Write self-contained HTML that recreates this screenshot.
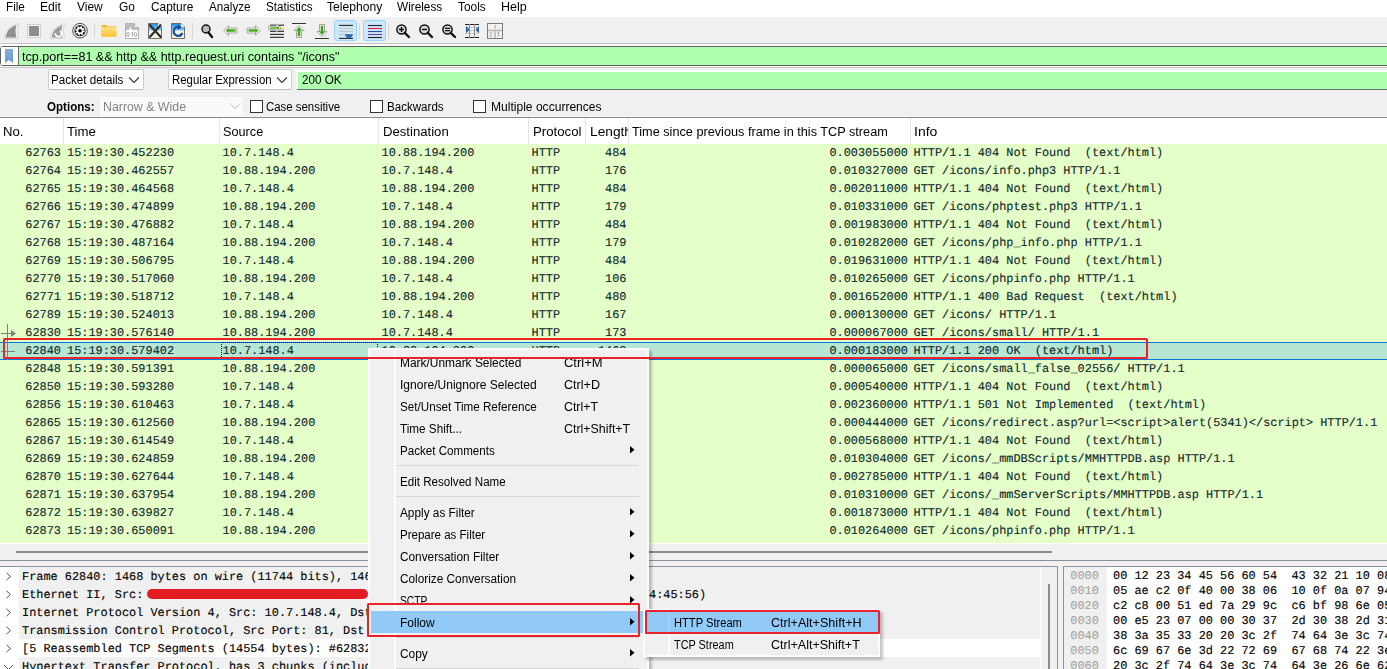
<!DOCTYPE html>
<html><head><meta charset="utf-8"><style>
html,body{margin:0;padding:0;}
body{width:1387px;height:669px;overflow:hidden;position:relative;background:#f0f0f0;}
</style></head><body>
<div style="position:absolute;left:0px;top:0px;width:1387px;height:17px;background:#ffffff;"></div>
<div style="position:absolute;left:0px;top:17px;width:1387px;height:1px;background:#f2f2f2;"></div>
<div style="position:absolute;left:0px;top:18px;width:1387px;height:25px;background:#f0f0f0;"></div>
<div style="position:absolute;left:0px;top:43px;width:1387px;height:1px;background:#c4c4c4;"></div>
<div style="position:absolute;left:0px;top:44px;width:1387px;height:2px;background:#fdfdfd;"></div>
<div style="position:absolute;left:5.6px;top:0.74px;font:400 12px/12px 'Liberation Sans', sans-serif;color:#000;white-space:pre;transform:scaleX(0.9771);transform-origin:0 0;">File</div>
<div style="position:absolute;left:40.199999999999996px;top:0.74px;font:400 12px/12px 'Liberation Sans', sans-serif;color:#000;white-space:pre;transform:scaleX(1.0103);transform-origin:0 0;">Edit</div>
<div style="position:absolute;left:77.0px;top:0.74px;font:400 12px/12px 'Liberation Sans', sans-serif;color:#000;white-space:pre;transform:scaleX(0.9962);transform-origin:0 0;">View</div>
<div style="position:absolute;left:118.7px;top:0.74px;font:400 12px/12px 'Liberation Sans', sans-serif;color:#000;white-space:pre;transform:scaleX(0.9990);transform-origin:0 0;">Go</div>
<div style="position:absolute;left:150.70000000000002px;top:0.74px;font:400 12px/12px 'Liberation Sans', sans-serif;color:#000;white-space:pre;transform:scaleX(0.9906);transform-origin:0 0;">Capture</div>
<div style="position:absolute;left:208.70000000000002px;top:0.74px;font:400 12px/12px 'Liberation Sans', sans-serif;color:#000;white-space:pre;transform:scaleX(0.9742);transform-origin:0 0;">Analyze</div>
<div style="position:absolute;left:265.5px;top:0.74px;font:400 12px/12px 'Liberation Sans', sans-serif;color:#000;white-space:pre;transform:scaleX(0.9705);transform-origin:0 0;">Statistics</div>
<div style="position:absolute;left:327.3px;top:0.74px;font:400 12px/12px 'Liberation Sans', sans-serif;color:#000;white-space:pre;transform:scaleX(1.0088);transform-origin:0 0;">Telephony</div>
<div style="position:absolute;left:397.3px;top:0.74px;font:400 12px/12px 'Liberation Sans', sans-serif;color:#000;white-space:pre;transform:scaleX(0.9823);transform-origin:0 0;">Wireless</div>
<div style="position:absolute;left:458.1px;top:0.74px;font:400 12px/12px 'Liberation Sans', sans-serif;color:#000;white-space:pre;transform:scaleX(0.9887);transform-origin:0 0;">Tools</div>
<div style="position:absolute;left:501.3px;top:0.74px;font:400 12px/12px 'Liberation Sans', sans-serif;color:#000;white-space:pre;transform:scaleX(1.0451);transform-origin:0 0;">Help</div>
<svg style="position:absolute;left:3px;top:23px" width="17" height="16" viewBox="0 0 17 16"><path d="M1 15.5 Q2 4 15.5 0.5 Q13 8 15.5 15.5 Z" fill="#fafafa" stroke="#d4d4d4" stroke-width="1"/><path d="M2.5 14.5 Q4 5 13.5 2 Q11.5 8 13.5 14.5 Z" fill="#8f8f8f"/></svg>
<svg style="position:absolute;left:27px;top:24px" width="14" height="14" viewBox="0 0 14 14"><rect x="0.5" y="0.5" width="13" height="13" fill="#f8f8f8" stroke="#d2d2d2"/><rect x="2" y="2" width="10" height="10" fill="#8e8e8e"/></svg>
<svg style="position:absolute;left:49px;top:23px" width="17" height="16" viewBox="0 0 17 16"><path d="M1 15.5 Q2 4 15.5 0.5 Q13 8 15.5 15.5 Z" fill="#fafafa" stroke="#d4d4d4" stroke-width="1"/><path d="M2.5 14.5 Q4 5 13.5 2 Q11.5 8 13.5 14.5 Z" fill="#9a9a9a"/><path d="M6.5 10 A3 3 0 1 0 11 8" stroke="#fff" stroke-width="1.6" fill="none"/></svg>
<svg style="position:absolute;left:72px;top:23px" width="16" height="16" viewBox="0 0 16 16"><circle cx="8" cy="7.7" r="7.3" fill="#fff" stroke="#4a4a4a" stroke-width="1"/><circle cx="8" cy="7.7" r="5.6" fill="#1c1c1c"/><circle cx="8" cy="7.7" r="3.4" fill="#fff"/><circle cx="8" cy="7.7" r="3.9" fill="none" stroke="#fff" stroke-width="1.7" stroke-dasharray="1.5 1.56"/><circle cx="8" cy="7.7" r="1.8" fill="#000"/></svg>
<div style="position:absolute;left:94px;top:23px;width:1px;height:16px;background:#d6d6d6"></div>
<svg style="position:absolute;left:101px;top:24px" width="16" height="13" viewBox="0 0 16 13"><defs><linearGradient id="fg" x1="0" y1="0" x2="0" y2="1"><stop offset="0" stop-color="#ffe18a"/><stop offset="1" stop-color="#fbc530"/></linearGradient></defs><path d="M0.5 1 H5 L6 2.2 H15 V12.5 H0.5 Z" fill="#f6b81e"/><rect x="0.5" y="3" width="15" height="9.5" fill="url(#fg)"/></svg>
<svg style="position:absolute;left:125px;top:23px" width="15" height="16" viewBox="0 0 15 16"><path d="M0.5 0.5 H9.5 L13.5 4.5 V15.5 H0.5 Z" fill="#fff" stroke="#b0b0b0"/><path d="M1 1 H9.5 V4.5 H13 V7 H1 Z" fill="#bdbdbd"/><path d="M4 7 Q5 4 5.5 3.5 Q6 5 7 7 Z" fill="#fff"/><path d="M9.5 0.5 V4.5 H13.5" fill="#fff" stroke="#b0b0b0"/><g fill="none" stroke="#a6a6a6" stroke-width="1"><ellipse cx="3" cy="11.5" rx="1.3" ry="2"/><path d="M6.5 9.5 L7.3 9.2 V13.5"/><ellipse cx="10.5" cy="11.5" rx="1.3" ry="2"/></g></svg>
<svg style="position:absolute;left:148px;top:23px" width="15" height="16" viewBox="0 0 15 16"><defs><linearGradient id="sky" x1="0" y1="0" x2="0" y2="1"><stop offset="0" stop-color="#1f8fe0"/><stop offset="0.42" stop-color="#7cc4f0"/><stop offset="0.5" stop-color="#f4f3e6"/><stop offset="1" stop-color="#f5f1d8"/></linearGradient></defs><path d="M0.5 0.5 H10 L13.5 4 V15.5 H0.5 Z" fill="url(#sky)" stroke="#6e6e6e"/><path d="M10 0.5 V4 H13.5 Z" fill="#fff"/><path d="M2 2.2 L12.5 13.8 M12.5 2.2 L2 13.8" stroke="#2a2a2a" stroke-width="2.1" stroke-linecap="round"/></svg>
<svg style="position:absolute;left:171px;top:23px" width="15" height="16" viewBox="0 0 15 16"><path d="M0.5 0.5 H10 L13.5 4 V15.5 H0.5 Z" fill="url(#sky)" stroke="#6e6e6e"/><path d="M10 0.5 V4 H13.5 Z" fill="#fff"/><path d="M11.3 10 A4.4 4.4 0 1 1 7.5 4" stroke="#1b4b9c" stroke-width="2.2" fill="none"/><path d="M6.5 1.3 L10.8 4.2 L6.8 7 Z" fill="#1b4b9c"/></svg>
<div style="position:absolute;left:192px;top:23px;width:1px;height:16px;background:#d6d6d6"></div>
<svg style="position:absolute;left:201px;top:24px" width="13" height="15" viewBox="0 0 13 15"><circle cx="5" cy="5" r="4" fill="#bdbdbd" stroke="#111" stroke-width="1.4"/><path d="M7.5 8.5 L11 13" stroke="#111" stroke-width="2.4" stroke-linecap="round"/></svg>
<svg style="position:absolute;left:223px;top:25px" width="15" height="11" viewBox="0 0 15 11"><path d="M0.7 5.5 L5.5 0.7 V3 H13.8 V8 H5.5 V10.3 Z" fill="#fff" stroke="#9a9a9a" stroke-width="0.9"/><path d="M2.5 5.5 L5.5 3 V4.3 H12.5 V6.7 H5.5 V8 Z" fill="#4aa81a"/></svg>
<svg style="position:absolute;left:246px;top:25px" width="15" height="11" viewBox="0 0 15 11"><path d="M14.3 5.5 L9.5 0.7 V3 H1.2 V8 H9.5 V10.3 Z" fill="#fff" stroke="#9a9a9a" stroke-width="0.9"/><path d="M12.5 5.5 L9.5 3 V4.3 H2.5 V6.7 H9.5 V8 Z" fill="#4aa81a"/></svg>
<svg style="position:absolute;left:268px;top:23px" width="17" height="16" viewBox="0 0 17 16"><g stroke="#222" stroke-width="1.1"><path d="M2 2.2 H16"/><path d="M2 8.3 H16"/><path d="M2 11.4 H16"/><path d="M2 14.3 H16"/></g><path d="M2 5.7 H16" stroke="#222" stroke-width="1.1"/><rect x="13" y="4.6" width="3" height="2.2" fill="#f5e23c"/><path d="M0.6 3.2 H8.2 V0.8 L13.2 5 L8.2 9.2 V6.8 H0.6 Z" fill="#fff" stroke="#a0a0a0" stroke-width="0.9"/><path d="M2 4.2 H9.2 V2.8 L11.6 5 L9.2 7.2 V5.8 H2 Z" fill="#4aa81a"/></svg>
<svg style="position:absolute;left:292px;top:23px" width="15" height="16" viewBox="0 0 15 16"><path d="M0 0.5 H14" stroke="#333" stroke-width="1"/><path d="M7 2.5 L12 7.5 H9.5 V14.5 H4.5 V7.5 H2 Z" fill="#fff" stroke="#9a9a9a" stroke-width="0.9"/><path d="M7 4 L10 7.5 H8.3 V13.3 H5.7 V7.5 H4 Z" fill="#3f9f18"/></svg>
<svg style="position:absolute;left:315px;top:23px" width="15" height="16" viewBox="0 0 15 16"><path d="M0 15.5 H14" stroke="#333" stroke-width="1"/><path d="M7 13.5 L12 8.5 H9.5 V1.5 H4.5 V8.5 H2 Z" fill="#fff" stroke="#9a9a9a" stroke-width="0.9"/><path d="M7 12 L10 8.5 H8.3 V2.7 H5.7 V8.5 H4 Z" fill="#3f9f18"/></svg>
<div style="position:absolute;left:334px;top:20px;width:21px;height:19px;background:#cce8ff;border:1px solid #99d1ff;border-radius:3px"></div>
<svg style="position:absolute;left:339px;top:24px" width="15" height="16" viewBox="0 0 15 16"><g stroke-width="1.1"><path d="M0 1.4 H14" stroke="#222"/><path d="M0 4.3 H14" stroke="#c4c4b8"/><path d="M0 7.3 H14" stroke="#c4c4b8"/><path d="M0 10.5 H14" stroke="#c4c4b8"/><path d="M0 14.4 H14" stroke="#222"/></g><path d="M6 10.3 H14 Q13.5 13.5 10 14.6 Q6.5 13.5 6 10.3 Z" fill="#2f64b0"/></svg>
<div style="position:absolute;left:359px;top:23px;width:1px;height:16px;background:#d6d6d6"></div>
<div style="position:absolute;left:363px;top:20px;width:21px;height:19px;background:#cce8ff;border:1px solid #99d1ff;border-radius:3px"></div>
<svg style="position:absolute;left:368px;top:24px" width="15" height="16" viewBox="0 0 15 16"><g stroke-width="1.1"><path d="M0 1.5 H14" stroke="#222"/><path d="M0 4.5 H14" stroke="#e0202a"/><path d="M0 7.5 H14" stroke="#2a4fa8"/><path d="M0 10.5 H14" stroke="#7a3f8c"/><path d="M0 13.5 H14" stroke="#222"/></g></svg>
<div style="position:absolute;left:388px;top:23px;width:1px;height:16px;background:#d6d6d6"></div>
<svg style="position:absolute;left:396px;top:24px" width="15" height="15" viewBox="0 0 15 15"><circle cx="5.5" cy="5.5" r="4.6" fill="#d6d6d6" stroke="#111" stroke-width="1.5"/><path d="M8.8 8.8 L13 13" stroke="#111" stroke-width="2.4" stroke-linecap="round"/><path d="M3 5.5 H8 M5.5 3 V8" stroke="#111" stroke-width="1.4"/></svg>
<svg style="position:absolute;left:419px;top:24px" width="15" height="15" viewBox="0 0 15 15"><circle cx="5.5" cy="5.5" r="4.6" fill="#d6d6d6" stroke="#111" stroke-width="1.5"/><path d="M8.8 8.8 L13 13" stroke="#111" stroke-width="2.4" stroke-linecap="round"/><path d="M3 5.5 H8" stroke="#111" stroke-width="1.4"/></svg>
<svg style="position:absolute;left:442px;top:24px" width="15" height="15" viewBox="0 0 15 15"><circle cx="5.5" cy="5.5" r="4.6" fill="#d6d6d6" stroke="#111" stroke-width="1.5"/><path d="M8.8 8.8 L13 13" stroke="#111" stroke-width="2.4" stroke-linecap="round"/><path d="M3 4.4 H8 M3 6.6 H8" stroke="#111" stroke-width="1.1"/></svg>
<svg style="position:absolute;left:465px;top:24px" width="15" height="15" viewBox="0 0 15 15"><g stroke="#c8c8bc" stroke-width="1"><path d="M0 3.5 H14 M0 6.5 H14 M0 9.5 H14"/></g><g stroke="#222" stroke-width="1.1"><path d="M0 0.5 H14 M0 13.5 H14"/></g><g stroke="#8a8a8a" stroke-width="1"><path d="M4.5 0 V14 M9.5 0 V14"/></g><path d="M1 2 Q3 3 4.3 5.5 Q3 8 1 9 Z M14 2 Q12 3 10.7 5.5 Q12 8 14 9 Z" fill="#2f64b0"/></svg>
<svg style="position:absolute;left:487px;top:23px" width="16" height="16" viewBox="0 0 16 16"><rect x="0.5" y="0.5" width="15" height="15" fill="#f2f2f2" stroke="#7a7a7a"/><path d="M1 7.5 H15 M8 7.5 V15" stroke="#b8b8b8" stroke-width="1.5"/><g fill="none" stroke="#9a9a9a" stroke-width="0.8"><path d="M7.3 3 L8.2 2.3 V6"/><path d="M2.6 10 Q3.8 9 4.6 10 Q4.6 11 2.6 13.2 H4.8"/><path d="M10.4 9.6 H12.2 L11 11 Q12.6 11.2 12 12.8 Q11 13.5 10.3 12.8"/></g></svg>
<div style="position:absolute;left:0px;top:46px;width:1400px;height:18px;border:1px solid #5f5f5f;border-radius:3px;background:#afffaf"></div>
<div style="position:absolute;left:1px;top:47px;width:17px;height:18px;background:#ffffff;"></div>
<div style="position:absolute;left:18px;top:47px;width:1px;height:18px;background:#6a6a6a;"></div>
<svg style="position:absolute;left:5px;top:49px" width="8" height="14"><defs><linearGradient id="bmg" x1="0" y1="0" x2="0" y2="1"><stop offset="0" stop-color="#86aedb"/><stop offset="1" stop-color="#6a9ad3"/></linearGradient></defs><path d="M0 0 H8 V14 L4 11 L0 14 Z" fill="url(#bmg)"/></svg>
<div style="position:absolute;left:21.5px;top:51.14px;font:400 12px/12px 'Liberation Sans', sans-serif;color:#000;white-space:pre;transform:scaleX(1.0443);transform-origin:0 0;">tcp.port==81 &amp;&amp; http &amp;&amp; http.request.uri contains "/icons"</div>
<div style="position:absolute;left:0px;top:66px;width:1387px;height:1px;background:#f6f6f6;"></div>
<div style="position:absolute;left:0px;top:67px;width:1387px;height:1px;background:#c6c6c6;"></div>
<div style="position:absolute;left:0px;top:68px;width:1387px;height:49px;background:#f0f0f0;"></div>
<div style="position:absolute;left:0px;top:116px;width:1387px;height:1px;background:#f8f8f8;"></div>
<div style="position:absolute;left:0px;top:117px;width:1387px;height:1px;background:#838994;"></div>
<div style="position:absolute;left:48px;top:69px;width:94px;height:19px;border:1px solid #cdcdcd;border-bottom-color:#bdbdbd;background:#fff;border-radius:2px"></div>
<div style="position:absolute;left:50.5px;top:73.74px;font:400 12px/12px 'Liberation Sans', sans-serif;color:#000;white-space:pre;transform:scaleX(0.9690);transform-origin:0 0;">Packet details</div>
<svg style="position:absolute;left:128px;top:76px" width="12" height="8"><path d="M1 1.5 L6 6.5 L11 1.5" stroke="#333" stroke-width="1.1" fill="none"/></svg>
<div style="position:absolute;left:168px;top:69px;width:122px;height:19px;border:1px solid #cdcdcd;border-bottom-color:#bdbdbd;background:#fff;border-radius:2px"></div>
<div style="position:absolute;left:171.7px;top:73.74px;font:400 12px/12px 'Liberation Sans', sans-serif;color:#000;white-space:pre;transform:scaleX(0.9511);transform-origin:0 0;">Regular Expression</div>
<svg style="position:absolute;left:276px;top:76px" width="12" height="8"><path d="M1 1.5 L6 6.5 L11 1.5" stroke="#333" stroke-width="1.1" fill="none"/></svg>
<div style="position:absolute;left:296px;top:70px;width:1100px;height:19px;background:#ffffff;"></div>
<div style="position:absolute;left:298px;top:72px;width:1100px;height:17px;background:#afffaf;"></div>
<div style="position:absolute;left:297px;top:89px;width:1100px;height:1px;background:#6e6e6e;"></div>
<div style="position:absolute;left:301.5px;top:74.44px;font:400 12px/12px 'Liberation Sans', sans-serif;color:#000;white-space:pre;transform:scaleX(0.9704);transform-origin:0 0;">200 OK</div>
<div style="position:absolute;left:47px;top:101.04px;font:700 12px/12px 'Liberation Sans', sans-serif;color:#000;white-space:pre;transform:scaleX(0.9650);transform-origin:0 0;">Options:</div>
<div style="position:absolute;left:100px;top:97px;width:143px;height:19px;background:#fafafa;"></div>
<div style="position:absolute;left:102.5px;top:101.04px;font:400 12px/12px 'Liberation Sans', sans-serif;color:#838383;white-space:pre;transform:scaleX(1.0287);transform-origin:0 0;">Narrow &amp; Wide</div>
<svg style="position:absolute;left:229px;top:102px" width="12" height="8"><path d="M1 1.5 L6 6.5 L11 1.5" stroke="#bcbcbc" stroke-width="1" fill="none"/></svg>
<div style="position:absolute;left:249.5px;top:99.7px;width:11px;height:11px;border:1px solid #333;background:#fff"></div>
<div style="position:absolute;left:266.4px;top:101.04px;font:400 12px/12px 'Liberation Sans', sans-serif;color:#000;white-space:pre;transform:scaleX(0.9507);transform-origin:0 0;">Case sensitive</div>
<div style="position:absolute;left:370px;top:99.7px;width:11px;height:11px;border:1px solid #333;background:#fff"></div>
<div style="position:absolute;left:387.4px;top:101.04px;font:400 12px/12px 'Liberation Sans', sans-serif;color:#000;white-space:pre;transform:scaleX(0.9644);transform-origin:0 0;">Backwards</div>
<div style="position:absolute;left:472.7px;top:99.7px;width:11px;height:11px;border:1px solid #333;background:#fff"></div>
<div style="position:absolute;left:490.79999999999995px;top:101.04px;font:400 12px/12px 'Liberation Sans', sans-serif;color:#000;white-space:pre;transform:scaleX(1.0050);transform-origin:0 0;">Multiple occurrences</div>
<div style="position:absolute;left:0px;top:118px;width:1387px;height:26px;background:#ffffff;"></div>
<div style="position:absolute;left:63px;top:118px;width:1px;height:26px;background:#e5e5e5;"></div>
<div style="position:absolute;left:219px;top:118px;width:1px;height:26px;background:#e5e5e5;"></div>
<div style="position:absolute;left:378px;top:118px;width:1px;height:26px;background:#e5e5e5;"></div>
<div style="position:absolute;left:528px;top:118px;width:1px;height:26px;background:#e5e5e5;"></div>
<div style="position:absolute;left:585px;top:118px;width:1px;height:26px;background:#e5e5e5;"></div>
<div style="position:absolute;left:628px;top:118px;width:1px;height:26px;background:#e5e5e5;"></div>
<div style="position:absolute;left:910px;top:118px;width:1px;height:26px;background:#e5e5e5;"></div>
<div style="position:absolute;left:3.1px;top:126.04px;font:400 12px/12px 'Liberation Sans', sans-serif;color:#000;white-space:pre;transform:scaleX(1.0970);transform-origin:0 0;">No.</div>
<div style="position:absolute;left:67.4px;top:126.04px;font:400 12px/12px 'Liberation Sans', sans-serif;color:#000;white-space:pre;transform:scaleX(1.1016);transform-origin:0 0;">Time</div>
<div style="position:absolute;left:223.4px;top:126.04px;font:400 12px/12px 'Liberation Sans', sans-serif;color:#000;white-space:pre;transform:scaleX(1.0570);transform-origin:0 0;">Source</div>
<div style="position:absolute;left:382.7px;top:126.04px;font:400 12px/12px 'Liberation Sans', sans-serif;color:#000;white-space:pre;transform:scaleX(1.0941);transform-origin:0 0;">Destination</div>
<div style="position:absolute;left:532.6999999999999px;top:126.04px;font:400 12px/12px 'Liberation Sans', sans-serif;color:#000;white-space:pre;transform:scaleX(1.1015);transform-origin:0 0;">Protocol</div>
<div style="position:absolute;left:632.4px;top:126.04px;font:400 12px/12px 'Liberation Sans', sans-serif;color:#000;white-space:pre;transform:scaleX(1.0576);transform-origin:0 0;">Time since previous frame in this TCP stream</div>
<div style="position:absolute;left:914.1px;top:126.04px;font:400 12px/12px 'Liberation Sans', sans-serif;color:#000;white-space:pre;transform:scaleX(1.1691);transform-origin:0 0;">Info</div>
<div style="position:absolute;left:586px;top:118px;width:42px;height:26px;overflow:hidden"><div style="position:absolute;left:3.8px;top:8.04px;font:400 12px/12px 'Liberation Sans', sans-serif;color:#000;white-space:pre;transform:scaleX(1.1443);transform-origin:0 0;">Length</div></div>
<div style="position:absolute;left:0px;top:144px;width:1387px;height:399px;background:#e4ffc7;"></div>
<div style="position:absolute;left:25.294189453125px;top:147.58px;font:400 11.9px/11.9px 'Liberation Mono', monospace;color:#12272e;white-space:pre;-webkit-text-stroke:0.12px #12272e;text-rendering:geometricPrecision;">62763</div>
<div style="position:absolute;left:67.0px;top:147.58px;font:400 11.9px/11.9px 'Liberation Mono', monospace;color:#12272e;white-space:pre;-webkit-text-stroke:0.12px #12272e;text-rendering:geometricPrecision;">15:19:30.452230</div>
<div style="position:absolute;left:222.5px;top:147.58px;font:400 11.9px/11.9px 'Liberation Mono', monospace;color:#12272e;white-space:pre;-webkit-text-stroke:0.12px #12272e;text-rendering:geometricPrecision;">10.7.148.4</div>
<div style="position:absolute;left:381.5px;top:147.58px;font:400 11.9px/11.9px 'Liberation Mono', monospace;color:#12272e;white-space:pre;-webkit-text-stroke:0.12px #12272e;text-rendering:geometricPrecision;">10.88.194.200</div>
<div style="position:absolute;left:531.5px;top:147.58px;font:400 11.9px/11.9px 'Liberation Mono', monospace;color:#12272e;white-space:pre;-webkit-text-stroke:0.12px #12272e;text-rendering:geometricPrecision;">HTTP</div>
<div style="position:absolute;left:605.076513671875px;top:147.58px;font:400 11.9px/11.9px 'Liberation Mono', monospace;color:#12272e;white-space:pre;-webkit-text-stroke:0.12px #12272e;text-rendering:geometricPrecision;">484</div>
<div style="position:absolute;left:829.447216796875px;top:147.58px;font:400 11.9px/11.9px 'Liberation Mono', monospace;color:#12272e;white-space:pre;-webkit-text-stroke:0.12px #12272e;text-rendering:geometricPrecision;">0.003055000</div>
<div style="position:absolute;left:913.5px;top:147.58px;font:400 11.9px/11.9px 'Liberation Mono', monospace;color:#12272e;white-space:pre;-webkit-text-stroke:0.12px #12272e;text-rendering:geometricPrecision;">HTTP/1.1 404 Not Found  (text/html)</div>
<div style="position:absolute;left:25.294189453125px;top:165.58px;font:400 11.9px/11.9px 'Liberation Mono', monospace;color:#12272e;white-space:pre;-webkit-text-stroke:0.12px #12272e;text-rendering:geometricPrecision;">62764</div>
<div style="position:absolute;left:67.0px;top:165.58px;font:400 11.9px/11.9px 'Liberation Mono', monospace;color:#12272e;white-space:pre;-webkit-text-stroke:0.12px #12272e;text-rendering:geometricPrecision;">15:19:30.462557</div>
<div style="position:absolute;left:222.5px;top:165.58px;font:400 11.9px/11.9px 'Liberation Mono', monospace;color:#12272e;white-space:pre;-webkit-text-stroke:0.12px #12272e;text-rendering:geometricPrecision;">10.88.194.200</div>
<div style="position:absolute;left:381.5px;top:165.58px;font:400 11.9px/11.9px 'Liberation Mono', monospace;color:#12272e;white-space:pre;-webkit-text-stroke:0.12px #12272e;text-rendering:geometricPrecision;">10.7.148.4</div>
<div style="position:absolute;left:531.5px;top:165.58px;font:400 11.9px/11.9px 'Liberation Mono', monospace;color:#12272e;white-space:pre;-webkit-text-stroke:0.12px #12272e;text-rendering:geometricPrecision;">HTTP</div>
<div style="position:absolute;left:605.076513671875px;top:165.58px;font:400 11.9px/11.9px 'Liberation Mono', monospace;color:#12272e;white-space:pre;-webkit-text-stroke:0.12px #12272e;text-rendering:geometricPrecision;">176</div>
<div style="position:absolute;left:829.447216796875px;top:165.58px;font:400 11.9px/11.9px 'Liberation Mono', monospace;color:#12272e;white-space:pre;-webkit-text-stroke:0.12px #12272e;text-rendering:geometricPrecision;">0.010327000</div>
<div style="position:absolute;left:913.5px;top:165.58px;font:400 11.9px/11.9px 'Liberation Mono', monospace;color:#12272e;white-space:pre;-webkit-text-stroke:0.12px #12272e;text-rendering:geometricPrecision;">GET /icons/info.php3 HTTP/1.1</div>
<div style="position:absolute;left:25.294189453125px;top:183.58px;font:400 11.9px/11.9px 'Liberation Mono', monospace;color:#12272e;white-space:pre;-webkit-text-stroke:0.12px #12272e;text-rendering:geometricPrecision;">62765</div>
<div style="position:absolute;left:67.0px;top:183.58px;font:400 11.9px/11.9px 'Liberation Mono', monospace;color:#12272e;white-space:pre;-webkit-text-stroke:0.12px #12272e;text-rendering:geometricPrecision;">15:19:30.464568</div>
<div style="position:absolute;left:222.5px;top:183.58px;font:400 11.9px/11.9px 'Liberation Mono', monospace;color:#12272e;white-space:pre;-webkit-text-stroke:0.12px #12272e;text-rendering:geometricPrecision;">10.7.148.4</div>
<div style="position:absolute;left:381.5px;top:183.58px;font:400 11.9px/11.9px 'Liberation Mono', monospace;color:#12272e;white-space:pre;-webkit-text-stroke:0.12px #12272e;text-rendering:geometricPrecision;">10.88.194.200</div>
<div style="position:absolute;left:531.5px;top:183.58px;font:400 11.9px/11.9px 'Liberation Mono', monospace;color:#12272e;white-space:pre;-webkit-text-stroke:0.12px #12272e;text-rendering:geometricPrecision;">HTTP</div>
<div style="position:absolute;left:605.076513671875px;top:183.58px;font:400 11.9px/11.9px 'Liberation Mono', monospace;color:#12272e;white-space:pre;-webkit-text-stroke:0.12px #12272e;text-rendering:geometricPrecision;">484</div>
<div style="position:absolute;left:829.447216796875px;top:183.58px;font:400 11.9px/11.9px 'Liberation Mono', monospace;color:#12272e;white-space:pre;-webkit-text-stroke:0.12px #12272e;text-rendering:geometricPrecision;">0.002011000</div>
<div style="position:absolute;left:913.5px;top:183.58px;font:400 11.9px/11.9px 'Liberation Mono', monospace;color:#12272e;white-space:pre;-webkit-text-stroke:0.12px #12272e;text-rendering:geometricPrecision;">HTTP/1.1 404 Not Found  (text/html)</div>
<div style="position:absolute;left:25.294189453125px;top:201.58px;font:400 11.9px/11.9px 'Liberation Mono', monospace;color:#12272e;white-space:pre;-webkit-text-stroke:0.12px #12272e;text-rendering:geometricPrecision;">62766</div>
<div style="position:absolute;left:67.0px;top:201.58px;font:400 11.9px/11.9px 'Liberation Mono', monospace;color:#12272e;white-space:pre;-webkit-text-stroke:0.12px #12272e;text-rendering:geometricPrecision;">15:19:30.474899</div>
<div style="position:absolute;left:222.5px;top:201.58px;font:400 11.9px/11.9px 'Liberation Mono', monospace;color:#12272e;white-space:pre;-webkit-text-stroke:0.12px #12272e;text-rendering:geometricPrecision;">10.88.194.200</div>
<div style="position:absolute;left:381.5px;top:201.58px;font:400 11.9px/11.9px 'Liberation Mono', monospace;color:#12272e;white-space:pre;-webkit-text-stroke:0.12px #12272e;text-rendering:geometricPrecision;">10.7.148.4</div>
<div style="position:absolute;left:531.5px;top:201.58px;font:400 11.9px/11.9px 'Liberation Mono', monospace;color:#12272e;white-space:pre;-webkit-text-stroke:0.12px #12272e;text-rendering:geometricPrecision;">HTTP</div>
<div style="position:absolute;left:605.076513671875px;top:201.58px;font:400 11.9px/11.9px 'Liberation Mono', monospace;color:#12272e;white-space:pre;-webkit-text-stroke:0.12px #12272e;text-rendering:geometricPrecision;">179</div>
<div style="position:absolute;left:829.447216796875px;top:201.58px;font:400 11.9px/11.9px 'Liberation Mono', monospace;color:#12272e;white-space:pre;-webkit-text-stroke:0.12px #12272e;text-rendering:geometricPrecision;">0.010331000</div>
<div style="position:absolute;left:913.5px;top:201.58px;font:400 11.9px/11.9px 'Liberation Mono', monospace;color:#12272e;white-space:pre;-webkit-text-stroke:0.12px #12272e;text-rendering:geometricPrecision;">GET /icons/phptest.php3 HTTP/1.1</div>
<div style="position:absolute;left:25.294189453125px;top:219.58px;font:400 11.9px/11.9px 'Liberation Mono', monospace;color:#12272e;white-space:pre;-webkit-text-stroke:0.12px #12272e;text-rendering:geometricPrecision;">62767</div>
<div style="position:absolute;left:67.0px;top:219.58px;font:400 11.9px/11.9px 'Liberation Mono', monospace;color:#12272e;white-space:pre;-webkit-text-stroke:0.12px #12272e;text-rendering:geometricPrecision;">15:19:30.476882</div>
<div style="position:absolute;left:222.5px;top:219.58px;font:400 11.9px/11.9px 'Liberation Mono', monospace;color:#12272e;white-space:pre;-webkit-text-stroke:0.12px #12272e;text-rendering:geometricPrecision;">10.7.148.4</div>
<div style="position:absolute;left:381.5px;top:219.58px;font:400 11.9px/11.9px 'Liberation Mono', monospace;color:#12272e;white-space:pre;-webkit-text-stroke:0.12px #12272e;text-rendering:geometricPrecision;">10.88.194.200</div>
<div style="position:absolute;left:531.5px;top:219.58px;font:400 11.9px/11.9px 'Liberation Mono', monospace;color:#12272e;white-space:pre;-webkit-text-stroke:0.12px #12272e;text-rendering:geometricPrecision;">HTTP</div>
<div style="position:absolute;left:605.076513671875px;top:219.58px;font:400 11.9px/11.9px 'Liberation Mono', monospace;color:#12272e;white-space:pre;-webkit-text-stroke:0.12px #12272e;text-rendering:geometricPrecision;">484</div>
<div style="position:absolute;left:829.447216796875px;top:219.58px;font:400 11.9px/11.9px 'Liberation Mono', monospace;color:#12272e;white-space:pre;-webkit-text-stroke:0.12px #12272e;text-rendering:geometricPrecision;">0.001983000</div>
<div style="position:absolute;left:913.5px;top:219.58px;font:400 11.9px/11.9px 'Liberation Mono', monospace;color:#12272e;white-space:pre;-webkit-text-stroke:0.12px #12272e;text-rendering:geometricPrecision;">HTTP/1.1 404 Not Found  (text/html)</div>
<div style="position:absolute;left:25.294189453125px;top:237.58px;font:400 11.9px/11.9px 'Liberation Mono', monospace;color:#12272e;white-space:pre;-webkit-text-stroke:0.12px #12272e;text-rendering:geometricPrecision;">62768</div>
<div style="position:absolute;left:67.0px;top:237.58px;font:400 11.9px/11.9px 'Liberation Mono', monospace;color:#12272e;white-space:pre;-webkit-text-stroke:0.12px #12272e;text-rendering:geometricPrecision;">15:19:30.487164</div>
<div style="position:absolute;left:222.5px;top:237.58px;font:400 11.9px/11.9px 'Liberation Mono', monospace;color:#12272e;white-space:pre;-webkit-text-stroke:0.12px #12272e;text-rendering:geometricPrecision;">10.88.194.200</div>
<div style="position:absolute;left:381.5px;top:237.58px;font:400 11.9px/11.9px 'Liberation Mono', monospace;color:#12272e;white-space:pre;-webkit-text-stroke:0.12px #12272e;text-rendering:geometricPrecision;">10.7.148.4</div>
<div style="position:absolute;left:531.5px;top:237.58px;font:400 11.9px/11.9px 'Liberation Mono', monospace;color:#12272e;white-space:pre;-webkit-text-stroke:0.12px #12272e;text-rendering:geometricPrecision;">HTTP</div>
<div style="position:absolute;left:605.076513671875px;top:237.58px;font:400 11.9px/11.9px 'Liberation Mono', monospace;color:#12272e;white-space:pre;-webkit-text-stroke:0.12px #12272e;text-rendering:geometricPrecision;">179</div>
<div style="position:absolute;left:829.447216796875px;top:237.58px;font:400 11.9px/11.9px 'Liberation Mono', monospace;color:#12272e;white-space:pre;-webkit-text-stroke:0.12px #12272e;text-rendering:geometricPrecision;">0.010282000</div>
<div style="position:absolute;left:913.5px;top:237.58px;font:400 11.9px/11.9px 'Liberation Mono', monospace;color:#12272e;white-space:pre;-webkit-text-stroke:0.12px #12272e;text-rendering:geometricPrecision;">GET /icons/php_info.php HTTP/1.1</div>
<div style="position:absolute;left:25.294189453125px;top:255.58px;font:400 11.9px/11.9px 'Liberation Mono', monospace;color:#12272e;white-space:pre;-webkit-text-stroke:0.12px #12272e;text-rendering:geometricPrecision;">62769</div>
<div style="position:absolute;left:67.0px;top:255.58px;font:400 11.9px/11.9px 'Liberation Mono', monospace;color:#12272e;white-space:pre;-webkit-text-stroke:0.12px #12272e;text-rendering:geometricPrecision;">15:19:30.506795</div>
<div style="position:absolute;left:222.5px;top:255.58px;font:400 11.9px/11.9px 'Liberation Mono', monospace;color:#12272e;white-space:pre;-webkit-text-stroke:0.12px #12272e;text-rendering:geometricPrecision;">10.7.148.4</div>
<div style="position:absolute;left:381.5px;top:255.58px;font:400 11.9px/11.9px 'Liberation Mono', monospace;color:#12272e;white-space:pre;-webkit-text-stroke:0.12px #12272e;text-rendering:geometricPrecision;">10.88.194.200</div>
<div style="position:absolute;left:531.5px;top:255.58px;font:400 11.9px/11.9px 'Liberation Mono', monospace;color:#12272e;white-space:pre;-webkit-text-stroke:0.12px #12272e;text-rendering:geometricPrecision;">HTTP</div>
<div style="position:absolute;left:605.076513671875px;top:255.58px;font:400 11.9px/11.9px 'Liberation Mono', monospace;color:#12272e;white-space:pre;-webkit-text-stroke:0.12px #12272e;text-rendering:geometricPrecision;">484</div>
<div style="position:absolute;left:829.447216796875px;top:255.58px;font:400 11.9px/11.9px 'Liberation Mono', monospace;color:#12272e;white-space:pre;-webkit-text-stroke:0.12px #12272e;text-rendering:geometricPrecision;">0.019631000</div>
<div style="position:absolute;left:913.5px;top:255.58px;font:400 11.9px/11.9px 'Liberation Mono', monospace;color:#12272e;white-space:pre;-webkit-text-stroke:0.12px #12272e;text-rendering:geometricPrecision;">HTTP/1.1 404 Not Found  (text/html)</div>
<div style="position:absolute;left:25.294189453125px;top:273.58px;font:400 11.9px/11.9px 'Liberation Mono', monospace;color:#12272e;white-space:pre;-webkit-text-stroke:0.12px #12272e;text-rendering:geometricPrecision;">62770</div>
<div style="position:absolute;left:67.0px;top:273.58px;font:400 11.9px/11.9px 'Liberation Mono', monospace;color:#12272e;white-space:pre;-webkit-text-stroke:0.12px #12272e;text-rendering:geometricPrecision;">15:19:30.517060</div>
<div style="position:absolute;left:222.5px;top:273.58px;font:400 11.9px/11.9px 'Liberation Mono', monospace;color:#12272e;white-space:pre;-webkit-text-stroke:0.12px #12272e;text-rendering:geometricPrecision;">10.88.194.200</div>
<div style="position:absolute;left:381.5px;top:273.58px;font:400 11.9px/11.9px 'Liberation Mono', monospace;color:#12272e;white-space:pre;-webkit-text-stroke:0.12px #12272e;text-rendering:geometricPrecision;">10.7.148.4</div>
<div style="position:absolute;left:531.5px;top:273.58px;font:400 11.9px/11.9px 'Liberation Mono', monospace;color:#12272e;white-space:pre;-webkit-text-stroke:0.12px #12272e;text-rendering:geometricPrecision;">HTTP</div>
<div style="position:absolute;left:605.076513671875px;top:273.58px;font:400 11.9px/11.9px 'Liberation Mono', monospace;color:#12272e;white-space:pre;-webkit-text-stroke:0.12px #12272e;text-rendering:geometricPrecision;">106</div>
<div style="position:absolute;left:829.447216796875px;top:273.58px;font:400 11.9px/11.9px 'Liberation Mono', monospace;color:#12272e;white-space:pre;-webkit-text-stroke:0.12px #12272e;text-rendering:geometricPrecision;">0.010265000</div>
<div style="position:absolute;left:913.5px;top:273.58px;font:400 11.9px/11.9px 'Liberation Mono', monospace;color:#12272e;white-space:pre;-webkit-text-stroke:0.12px #12272e;text-rendering:geometricPrecision;">GET /icons/phpinfo.php HTTP/1.1</div>
<div style="position:absolute;left:25.294189453125px;top:291.58px;font:400 11.9px/11.9px 'Liberation Mono', monospace;color:#12272e;white-space:pre;-webkit-text-stroke:0.12px #12272e;text-rendering:geometricPrecision;">62771</div>
<div style="position:absolute;left:67.0px;top:291.58px;font:400 11.9px/11.9px 'Liberation Mono', monospace;color:#12272e;white-space:pre;-webkit-text-stroke:0.12px #12272e;text-rendering:geometricPrecision;">15:19:30.518712</div>
<div style="position:absolute;left:222.5px;top:291.58px;font:400 11.9px/11.9px 'Liberation Mono', monospace;color:#12272e;white-space:pre;-webkit-text-stroke:0.12px #12272e;text-rendering:geometricPrecision;">10.7.148.4</div>
<div style="position:absolute;left:381.5px;top:291.58px;font:400 11.9px/11.9px 'Liberation Mono', monospace;color:#12272e;white-space:pre;-webkit-text-stroke:0.12px #12272e;text-rendering:geometricPrecision;">10.88.194.200</div>
<div style="position:absolute;left:531.5px;top:291.58px;font:400 11.9px/11.9px 'Liberation Mono', monospace;color:#12272e;white-space:pre;-webkit-text-stroke:0.12px #12272e;text-rendering:geometricPrecision;">HTTP</div>
<div style="position:absolute;left:605.076513671875px;top:291.58px;font:400 11.9px/11.9px 'Liberation Mono', monospace;color:#12272e;white-space:pre;-webkit-text-stroke:0.12px #12272e;text-rendering:geometricPrecision;">480</div>
<div style="position:absolute;left:829.447216796875px;top:291.58px;font:400 11.9px/11.9px 'Liberation Mono', monospace;color:#12272e;white-space:pre;-webkit-text-stroke:0.12px #12272e;text-rendering:geometricPrecision;">0.001652000</div>
<div style="position:absolute;left:913.5px;top:291.58px;font:400 11.9px/11.9px 'Liberation Mono', monospace;color:#12272e;white-space:pre;-webkit-text-stroke:0.12px #12272e;text-rendering:geometricPrecision;">HTTP/1.1 400 Bad Request  (text/html)</div>
<div style="position:absolute;left:25.294189453125px;top:309.58px;font:400 11.9px/11.9px 'Liberation Mono', monospace;color:#12272e;white-space:pre;-webkit-text-stroke:0.12px #12272e;text-rendering:geometricPrecision;">62789</div>
<div style="position:absolute;left:67.0px;top:309.58px;font:400 11.9px/11.9px 'Liberation Mono', monospace;color:#12272e;white-space:pre;-webkit-text-stroke:0.12px #12272e;text-rendering:geometricPrecision;">15:19:30.524013</div>
<div style="position:absolute;left:222.5px;top:309.58px;font:400 11.9px/11.9px 'Liberation Mono', monospace;color:#12272e;white-space:pre;-webkit-text-stroke:0.12px #12272e;text-rendering:geometricPrecision;">10.88.194.200</div>
<div style="position:absolute;left:381.5px;top:309.58px;font:400 11.9px/11.9px 'Liberation Mono', monospace;color:#12272e;white-space:pre;-webkit-text-stroke:0.12px #12272e;text-rendering:geometricPrecision;">10.7.148.4</div>
<div style="position:absolute;left:531.5px;top:309.58px;font:400 11.9px/11.9px 'Liberation Mono', monospace;color:#12272e;white-space:pre;-webkit-text-stroke:0.12px #12272e;text-rendering:geometricPrecision;">HTTP</div>
<div style="position:absolute;left:605.076513671875px;top:309.58px;font:400 11.9px/11.9px 'Liberation Mono', monospace;color:#12272e;white-space:pre;-webkit-text-stroke:0.12px #12272e;text-rendering:geometricPrecision;">167</div>
<div style="position:absolute;left:829.447216796875px;top:309.58px;font:400 11.9px/11.9px 'Liberation Mono', monospace;color:#12272e;white-space:pre;-webkit-text-stroke:0.12px #12272e;text-rendering:geometricPrecision;">0.000130000</div>
<div style="position:absolute;left:913.5px;top:309.58px;font:400 11.9px/11.9px 'Liberation Mono', monospace;color:#12272e;white-space:pre;-webkit-text-stroke:0.12px #12272e;text-rendering:geometricPrecision;">GET /icons/ HTTP/1.1</div>
<div style="position:absolute;left:25.294189453125px;top:327.58px;font:400 11.9px/11.9px 'Liberation Mono', monospace;color:#12272e;white-space:pre;-webkit-text-stroke:0.12px #12272e;text-rendering:geometricPrecision;">62830</div>
<div style="position:absolute;left:67.0px;top:327.58px;font:400 11.9px/11.9px 'Liberation Mono', monospace;color:#12272e;white-space:pre;-webkit-text-stroke:0.12px #12272e;text-rendering:geometricPrecision;">15:19:30.576140</div>
<div style="position:absolute;left:222.5px;top:327.58px;font:400 11.9px/11.9px 'Liberation Mono', monospace;color:#12272e;white-space:pre;-webkit-text-stroke:0.12px #12272e;text-rendering:geometricPrecision;">10.88.194.200</div>
<div style="position:absolute;left:381.5px;top:327.58px;font:400 11.9px/11.9px 'Liberation Mono', monospace;color:#12272e;white-space:pre;-webkit-text-stroke:0.12px #12272e;text-rendering:geometricPrecision;">10.7.148.4</div>
<div style="position:absolute;left:531.5px;top:327.58px;font:400 11.9px/11.9px 'Liberation Mono', monospace;color:#12272e;white-space:pre;-webkit-text-stroke:0.12px #12272e;text-rendering:geometricPrecision;">HTTP</div>
<div style="position:absolute;left:605.076513671875px;top:327.58px;font:400 11.9px/11.9px 'Liberation Mono', monospace;color:#12272e;white-space:pre;-webkit-text-stroke:0.12px #12272e;text-rendering:geometricPrecision;">173</div>
<div style="position:absolute;left:829.447216796875px;top:327.58px;font:400 11.9px/11.9px 'Liberation Mono', monospace;color:#12272e;white-space:pre;-webkit-text-stroke:0.12px #12272e;text-rendering:geometricPrecision;">0.000067000</div>
<div style="position:absolute;left:913.5px;top:327.58px;font:400 11.9px/11.9px 'Liberation Mono', monospace;color:#12272e;white-space:pre;-webkit-text-stroke:0.12px #12272e;text-rendering:geometricPrecision;">GET /icons/small/ HTTP/1.1</div>
<div style="position:absolute;left:0px;top:342px;width:1387px;height:18px;background:#b7e6d2;"></div>
<div style="position:absolute;left:0px;top:342px;width:1387px;height:1px;background:#0078d7;"></div>
<div style="position:absolute;left:0px;top:359px;width:1387px;height:1px;background:#0078d7;"></div>
<div style="position:absolute;left:221px;top:342px;width:157px;height:17px;border:1px dotted #000;box-sizing:border-box"></div>
<div style="position:absolute;left:25.294189453125px;top:345.58px;font:400 11.9px/11.9px 'Liberation Mono', monospace;color:#12272e;white-space:pre;-webkit-text-stroke:0.12px #12272e;text-rendering:geometricPrecision;">62840</div>
<div style="position:absolute;left:67.0px;top:345.58px;font:400 11.9px/11.9px 'Liberation Mono', monospace;color:#12272e;white-space:pre;-webkit-text-stroke:0.12px #12272e;text-rendering:geometricPrecision;">15:19:30.579402</div>
<div style="position:absolute;left:222.5px;top:345.58px;font:400 11.9px/11.9px 'Liberation Mono', monospace;color:#12272e;white-space:pre;-webkit-text-stroke:0.12px #12272e;text-rendering:geometricPrecision;">10.7.148.4</div>
<div style="position:absolute;left:381.5px;top:345.58px;font:400 11.9px/11.9px 'Liberation Mono', monospace;color:#12272e;white-space:pre;-webkit-text-stroke:0.12px #12272e;text-rendering:geometricPrecision;">10.88.194.200</div>
<div style="position:absolute;left:531.5px;top:345.58px;font:400 11.9px/11.9px 'Liberation Mono', monospace;color:#12272e;white-space:pre;-webkit-text-stroke:0.12px #12272e;text-rendering:geometricPrecision;">HTTP</div>
<div style="position:absolute;left:597.9353515625px;top:345.58px;font:400 11.9px/11.9px 'Liberation Mono', monospace;color:#12272e;white-space:pre;-webkit-text-stroke:0.12px #12272e;text-rendering:geometricPrecision;">1468</div>
<div style="position:absolute;left:829.447216796875px;top:345.58px;font:400 11.9px/11.9px 'Liberation Mono', monospace;color:#12272e;white-space:pre;-webkit-text-stroke:0.12px #12272e;text-rendering:geometricPrecision;">0.000183000</div>
<div style="position:absolute;left:913.5px;top:345.58px;font:400 11.9px/11.9px 'Liberation Mono', monospace;color:#12272e;white-space:pre;-webkit-text-stroke:0.12px #12272e;text-rendering:geometricPrecision;">HTTP/1.1 200 OK  (text/html)</div>
<div style="position:absolute;left:25.294189453125px;top:363.58px;font:400 11.9px/11.9px 'Liberation Mono', monospace;color:#12272e;white-space:pre;-webkit-text-stroke:0.12px #12272e;text-rendering:geometricPrecision;">62848</div>
<div style="position:absolute;left:67.0px;top:363.58px;font:400 11.9px/11.9px 'Liberation Mono', monospace;color:#12272e;white-space:pre;-webkit-text-stroke:0.12px #12272e;text-rendering:geometricPrecision;">15:19:30.591391</div>
<div style="position:absolute;left:222.5px;top:363.58px;font:400 11.9px/11.9px 'Liberation Mono', monospace;color:#12272e;white-space:pre;-webkit-text-stroke:0.12px #12272e;text-rendering:geometricPrecision;">10.88.194.200</div>
<div style="position:absolute;left:381.5px;top:363.58px;font:400 11.9px/11.9px 'Liberation Mono', monospace;color:#12272e;white-space:pre;-webkit-text-stroke:0.12px #12272e;text-rendering:geometricPrecision;">10.7.148.4</div>
<div style="position:absolute;left:531.5px;top:363.58px;font:400 11.9px/11.9px 'Liberation Mono', monospace;color:#12272e;white-space:pre;-webkit-text-stroke:0.12px #12272e;text-rendering:geometricPrecision;">HTTP</div>
<div style="position:absolute;left:605.076513671875px;top:363.58px;font:400 11.9px/11.9px 'Liberation Mono', monospace;color:#12272e;white-space:pre;-webkit-text-stroke:0.12px #12272e;text-rendering:geometricPrecision;">186</div>
<div style="position:absolute;left:829.447216796875px;top:363.58px;font:400 11.9px/11.9px 'Liberation Mono', monospace;color:#12272e;white-space:pre;-webkit-text-stroke:0.12px #12272e;text-rendering:geometricPrecision;">0.000065000</div>
<div style="position:absolute;left:913.5px;top:363.58px;font:400 11.9px/11.9px 'Liberation Mono', monospace;color:#12272e;white-space:pre;-webkit-text-stroke:0.12px #12272e;text-rendering:geometricPrecision;">GET /icons/small_false_02556/ HTTP/1.1</div>
<div style="position:absolute;left:25.294189453125px;top:381.58px;font:400 11.9px/11.9px 'Liberation Mono', monospace;color:#12272e;white-space:pre;-webkit-text-stroke:0.12px #12272e;text-rendering:geometricPrecision;">62850</div>
<div style="position:absolute;left:67.0px;top:381.58px;font:400 11.9px/11.9px 'Liberation Mono', monospace;color:#12272e;white-space:pre;-webkit-text-stroke:0.12px #12272e;text-rendering:geometricPrecision;">15:19:30.593280</div>
<div style="position:absolute;left:222.5px;top:381.58px;font:400 11.9px/11.9px 'Liberation Mono', monospace;color:#12272e;white-space:pre;-webkit-text-stroke:0.12px #12272e;text-rendering:geometricPrecision;">10.7.148.4</div>
<div style="position:absolute;left:381.5px;top:381.58px;font:400 11.9px/11.9px 'Liberation Mono', monospace;color:#12272e;white-space:pre;-webkit-text-stroke:0.12px #12272e;text-rendering:geometricPrecision;">10.88.194.200</div>
<div style="position:absolute;left:531.5px;top:381.58px;font:400 11.9px/11.9px 'Liberation Mono', monospace;color:#12272e;white-space:pre;-webkit-text-stroke:0.12px #12272e;text-rendering:geometricPrecision;">HTTP</div>
<div style="position:absolute;left:605.076513671875px;top:381.58px;font:400 11.9px/11.9px 'Liberation Mono', monospace;color:#12272e;white-space:pre;-webkit-text-stroke:0.12px #12272e;text-rendering:geometricPrecision;">484</div>
<div style="position:absolute;left:829.447216796875px;top:381.58px;font:400 11.9px/11.9px 'Liberation Mono', monospace;color:#12272e;white-space:pre;-webkit-text-stroke:0.12px #12272e;text-rendering:geometricPrecision;">0.000540000</div>
<div style="position:absolute;left:913.5px;top:381.58px;font:400 11.9px/11.9px 'Liberation Mono', monospace;color:#12272e;white-space:pre;-webkit-text-stroke:0.12px #12272e;text-rendering:geometricPrecision;">HTTP/1.1 404 Not Found  (text/html)</div>
<div style="position:absolute;left:25.294189453125px;top:399.58px;font:400 11.9px/11.9px 'Liberation Mono', monospace;color:#12272e;white-space:pre;-webkit-text-stroke:0.12px #12272e;text-rendering:geometricPrecision;">62856</div>
<div style="position:absolute;left:67.0px;top:399.58px;font:400 11.9px/11.9px 'Liberation Mono', monospace;color:#12272e;white-space:pre;-webkit-text-stroke:0.12px #12272e;text-rendering:geometricPrecision;">15:19:30.610463</div>
<div style="position:absolute;left:222.5px;top:399.58px;font:400 11.9px/11.9px 'Liberation Mono', monospace;color:#12272e;white-space:pre;-webkit-text-stroke:0.12px #12272e;text-rendering:geometricPrecision;">10.7.148.4</div>
<div style="position:absolute;left:381.5px;top:399.58px;font:400 11.9px/11.9px 'Liberation Mono', monospace;color:#12272e;white-space:pre;-webkit-text-stroke:0.12px #12272e;text-rendering:geometricPrecision;">10.88.194.200</div>
<div style="position:absolute;left:531.5px;top:399.58px;font:400 11.9px/11.9px 'Liberation Mono', monospace;color:#12272e;white-space:pre;-webkit-text-stroke:0.12px #12272e;text-rendering:geometricPrecision;">HTTP</div>
<div style="position:absolute;left:605.076513671875px;top:399.58px;font:400 11.9px/11.9px 'Liberation Mono', monospace;color:#12272e;white-space:pre;-webkit-text-stroke:0.12px #12272e;text-rendering:geometricPrecision;">497</div>
<div style="position:absolute;left:829.447216796875px;top:399.58px;font:400 11.9px/11.9px 'Liberation Mono', monospace;color:#12272e;white-space:pre;-webkit-text-stroke:0.12px #12272e;text-rendering:geometricPrecision;">0.002360000</div>
<div style="position:absolute;left:913.5px;top:399.58px;font:400 11.9px/11.9px 'Liberation Mono', monospace;color:#12272e;white-space:pre;-webkit-text-stroke:0.12px #12272e;text-rendering:geometricPrecision;">HTTP/1.1 501 Not Implemented  (text/html)</div>
<div style="position:absolute;left:25.294189453125px;top:417.58px;font:400 11.9px/11.9px 'Liberation Mono', monospace;color:#12272e;white-space:pre;-webkit-text-stroke:0.12px #12272e;text-rendering:geometricPrecision;">62865</div>
<div style="position:absolute;left:67.0px;top:417.58px;font:400 11.9px/11.9px 'Liberation Mono', monospace;color:#12272e;white-space:pre;-webkit-text-stroke:0.12px #12272e;text-rendering:geometricPrecision;">15:19:30.612560</div>
<div style="position:absolute;left:222.5px;top:417.58px;font:400 11.9px/11.9px 'Liberation Mono', monospace;color:#12272e;white-space:pre;-webkit-text-stroke:0.12px #12272e;text-rendering:geometricPrecision;">10.88.194.200</div>
<div style="position:absolute;left:381.5px;top:417.58px;font:400 11.9px/11.9px 'Liberation Mono', monospace;color:#12272e;white-space:pre;-webkit-text-stroke:0.12px #12272e;text-rendering:geometricPrecision;">10.7.148.4</div>
<div style="position:absolute;left:531.5px;top:417.58px;font:400 11.9px/11.9px 'Liberation Mono', monospace;color:#12272e;white-space:pre;-webkit-text-stroke:0.12px #12272e;text-rendering:geometricPrecision;">HTTP</div>
<div style="position:absolute;left:605.076513671875px;top:417.58px;font:400 11.9px/11.9px 'Liberation Mono', monospace;color:#12272e;white-space:pre;-webkit-text-stroke:0.12px #12272e;text-rendering:geometricPrecision;">213</div>
<div style="position:absolute;left:829.447216796875px;top:417.58px;font:400 11.9px/11.9px 'Liberation Mono', monospace;color:#12272e;white-space:pre;-webkit-text-stroke:0.12px #12272e;text-rendering:geometricPrecision;">0.000444000</div>
<div style="position:absolute;left:913.5px;top:417.58px;font:400 11.9px/11.9px 'Liberation Mono', monospace;color:#12272e;white-space:pre;-webkit-text-stroke:0.12px #12272e;text-rendering:geometricPrecision;">GET /icons/redirect.asp?url=&lt;script&gt;alert(5341)&lt;/script&gt; HTTP/1.1</div>
<div style="position:absolute;left:25.294189453125px;top:435.58px;font:400 11.9px/11.9px 'Liberation Mono', monospace;color:#12272e;white-space:pre;-webkit-text-stroke:0.12px #12272e;text-rendering:geometricPrecision;">62867</div>
<div style="position:absolute;left:67.0px;top:435.58px;font:400 11.9px/11.9px 'Liberation Mono', monospace;color:#12272e;white-space:pre;-webkit-text-stroke:0.12px #12272e;text-rendering:geometricPrecision;">15:19:30.614549</div>
<div style="position:absolute;left:222.5px;top:435.58px;font:400 11.9px/11.9px 'Liberation Mono', monospace;color:#12272e;white-space:pre;-webkit-text-stroke:0.12px #12272e;text-rendering:geometricPrecision;">10.7.148.4</div>
<div style="position:absolute;left:381.5px;top:435.58px;font:400 11.9px/11.9px 'Liberation Mono', monospace;color:#12272e;white-space:pre;-webkit-text-stroke:0.12px #12272e;text-rendering:geometricPrecision;">10.88.194.200</div>
<div style="position:absolute;left:531.5px;top:435.58px;font:400 11.9px/11.9px 'Liberation Mono', monospace;color:#12272e;white-space:pre;-webkit-text-stroke:0.12px #12272e;text-rendering:geometricPrecision;">HTTP</div>
<div style="position:absolute;left:605.076513671875px;top:435.58px;font:400 11.9px/11.9px 'Liberation Mono', monospace;color:#12272e;white-space:pre;-webkit-text-stroke:0.12px #12272e;text-rendering:geometricPrecision;">484</div>
<div style="position:absolute;left:829.447216796875px;top:435.58px;font:400 11.9px/11.9px 'Liberation Mono', monospace;color:#12272e;white-space:pre;-webkit-text-stroke:0.12px #12272e;text-rendering:geometricPrecision;">0.000568000</div>
<div style="position:absolute;left:913.5px;top:435.58px;font:400 11.9px/11.9px 'Liberation Mono', monospace;color:#12272e;white-space:pre;-webkit-text-stroke:0.12px #12272e;text-rendering:geometricPrecision;">HTTP/1.1 404 Not Found  (text/html)</div>
<div style="position:absolute;left:25.294189453125px;top:453.58px;font:400 11.9px/11.9px 'Liberation Mono', monospace;color:#12272e;white-space:pre;-webkit-text-stroke:0.12px #12272e;text-rendering:geometricPrecision;">62869</div>
<div style="position:absolute;left:67.0px;top:453.58px;font:400 11.9px/11.9px 'Liberation Mono', monospace;color:#12272e;white-space:pre;-webkit-text-stroke:0.12px #12272e;text-rendering:geometricPrecision;">15:19:30.624859</div>
<div style="position:absolute;left:222.5px;top:453.58px;font:400 11.9px/11.9px 'Liberation Mono', monospace;color:#12272e;white-space:pre;-webkit-text-stroke:0.12px #12272e;text-rendering:geometricPrecision;">10.88.194.200</div>
<div style="position:absolute;left:381.5px;top:453.58px;font:400 11.9px/11.9px 'Liberation Mono', monospace;color:#12272e;white-space:pre;-webkit-text-stroke:0.12px #12272e;text-rendering:geometricPrecision;">10.7.148.4</div>
<div style="position:absolute;left:531.5px;top:453.58px;font:400 11.9px/11.9px 'Liberation Mono', monospace;color:#12272e;white-space:pre;-webkit-text-stroke:0.12px #12272e;text-rendering:geometricPrecision;">HTTP</div>
<div style="position:absolute;left:605.076513671875px;top:453.58px;font:400 11.9px/11.9px 'Liberation Mono', monospace;color:#12272e;white-space:pre;-webkit-text-stroke:0.12px #12272e;text-rendering:geometricPrecision;">192</div>
<div style="position:absolute;left:829.447216796875px;top:453.58px;font:400 11.9px/11.9px 'Liberation Mono', monospace;color:#12272e;white-space:pre;-webkit-text-stroke:0.12px #12272e;text-rendering:geometricPrecision;">0.010304000</div>
<div style="position:absolute;left:913.5px;top:453.58px;font:400 11.9px/11.9px 'Liberation Mono', monospace;color:#12272e;white-space:pre;-webkit-text-stroke:0.12px #12272e;text-rendering:geometricPrecision;">GET /icons/_mmDBScripts/MMHTTPDB.asp HTTP/1.1</div>
<div style="position:absolute;left:25.294189453125px;top:471.58px;font:400 11.9px/11.9px 'Liberation Mono', monospace;color:#12272e;white-space:pre;-webkit-text-stroke:0.12px #12272e;text-rendering:geometricPrecision;">62870</div>
<div style="position:absolute;left:67.0px;top:471.58px;font:400 11.9px/11.9px 'Liberation Mono', monospace;color:#12272e;white-space:pre;-webkit-text-stroke:0.12px #12272e;text-rendering:geometricPrecision;">15:19:30.627644</div>
<div style="position:absolute;left:222.5px;top:471.58px;font:400 11.9px/11.9px 'Liberation Mono', monospace;color:#12272e;white-space:pre;-webkit-text-stroke:0.12px #12272e;text-rendering:geometricPrecision;">10.7.148.4</div>
<div style="position:absolute;left:381.5px;top:471.58px;font:400 11.9px/11.9px 'Liberation Mono', monospace;color:#12272e;white-space:pre;-webkit-text-stroke:0.12px #12272e;text-rendering:geometricPrecision;">10.88.194.200</div>
<div style="position:absolute;left:531.5px;top:471.58px;font:400 11.9px/11.9px 'Liberation Mono', monospace;color:#12272e;white-space:pre;-webkit-text-stroke:0.12px #12272e;text-rendering:geometricPrecision;">HTTP</div>
<div style="position:absolute;left:605.076513671875px;top:471.58px;font:400 11.9px/11.9px 'Liberation Mono', monospace;color:#12272e;white-space:pre;-webkit-text-stroke:0.12px #12272e;text-rendering:geometricPrecision;">484</div>
<div style="position:absolute;left:829.447216796875px;top:471.58px;font:400 11.9px/11.9px 'Liberation Mono', monospace;color:#12272e;white-space:pre;-webkit-text-stroke:0.12px #12272e;text-rendering:geometricPrecision;">0.002785000</div>
<div style="position:absolute;left:913.5px;top:471.58px;font:400 11.9px/11.9px 'Liberation Mono', monospace;color:#12272e;white-space:pre;-webkit-text-stroke:0.12px #12272e;text-rendering:geometricPrecision;">HTTP/1.1 404 Not Found  (text/html)</div>
<div style="position:absolute;left:25.294189453125px;top:489.58px;font:400 11.9px/11.9px 'Liberation Mono', monospace;color:#12272e;white-space:pre;-webkit-text-stroke:0.12px #12272e;text-rendering:geometricPrecision;">62871</div>
<div style="position:absolute;left:67.0px;top:489.58px;font:400 11.9px/11.9px 'Liberation Mono', monospace;color:#12272e;white-space:pre;-webkit-text-stroke:0.12px #12272e;text-rendering:geometricPrecision;">15:19:30.637954</div>
<div style="position:absolute;left:222.5px;top:489.58px;font:400 11.9px/11.9px 'Liberation Mono', monospace;color:#12272e;white-space:pre;-webkit-text-stroke:0.12px #12272e;text-rendering:geometricPrecision;">10.88.194.200</div>
<div style="position:absolute;left:381.5px;top:489.58px;font:400 11.9px/11.9px 'Liberation Mono', monospace;color:#12272e;white-space:pre;-webkit-text-stroke:0.12px #12272e;text-rendering:geometricPrecision;">10.7.148.4</div>
<div style="position:absolute;left:531.5px;top:489.58px;font:400 11.9px/11.9px 'Liberation Mono', monospace;color:#12272e;white-space:pre;-webkit-text-stroke:0.12px #12272e;text-rendering:geometricPrecision;">HTTP</div>
<div style="position:absolute;left:605.076513671875px;top:489.58px;font:400 11.9px/11.9px 'Liberation Mono', monospace;color:#12272e;white-space:pre;-webkit-text-stroke:0.12px #12272e;text-rendering:geometricPrecision;">196</div>
<div style="position:absolute;left:829.447216796875px;top:489.58px;font:400 11.9px/11.9px 'Liberation Mono', monospace;color:#12272e;white-space:pre;-webkit-text-stroke:0.12px #12272e;text-rendering:geometricPrecision;">0.010310000</div>
<div style="position:absolute;left:913.5px;top:489.58px;font:400 11.9px/11.9px 'Liberation Mono', monospace;color:#12272e;white-space:pre;-webkit-text-stroke:0.12px #12272e;text-rendering:geometricPrecision;">GET /icons/_mmServerScripts/MMHTTPDB.asp HTTP/1.1</div>
<div style="position:absolute;left:25.294189453125px;top:507.58px;font:400 11.9px/11.9px 'Liberation Mono', monospace;color:#12272e;white-space:pre;-webkit-text-stroke:0.12px #12272e;text-rendering:geometricPrecision;">62872</div>
<div style="position:absolute;left:67.0px;top:507.58px;font:400 11.9px/11.9px 'Liberation Mono', monospace;color:#12272e;white-space:pre;-webkit-text-stroke:0.12px #12272e;text-rendering:geometricPrecision;">15:19:30.639827</div>
<div style="position:absolute;left:222.5px;top:507.58px;font:400 11.9px/11.9px 'Liberation Mono', monospace;color:#12272e;white-space:pre;-webkit-text-stroke:0.12px #12272e;text-rendering:geometricPrecision;">10.7.148.4</div>
<div style="position:absolute;left:381.5px;top:507.58px;font:400 11.9px/11.9px 'Liberation Mono', monospace;color:#12272e;white-space:pre;-webkit-text-stroke:0.12px #12272e;text-rendering:geometricPrecision;">10.88.194.200</div>
<div style="position:absolute;left:531.5px;top:507.58px;font:400 11.9px/11.9px 'Liberation Mono', monospace;color:#12272e;white-space:pre;-webkit-text-stroke:0.12px #12272e;text-rendering:geometricPrecision;">HTTP</div>
<div style="position:absolute;left:605.076513671875px;top:507.58px;font:400 11.9px/11.9px 'Liberation Mono', monospace;color:#12272e;white-space:pre;-webkit-text-stroke:0.12px #12272e;text-rendering:geometricPrecision;">484</div>
<div style="position:absolute;left:829.447216796875px;top:507.58px;font:400 11.9px/11.9px 'Liberation Mono', monospace;color:#12272e;white-space:pre;-webkit-text-stroke:0.12px #12272e;text-rendering:geometricPrecision;">0.001873000</div>
<div style="position:absolute;left:913.5px;top:507.58px;font:400 11.9px/11.9px 'Liberation Mono', monospace;color:#12272e;white-space:pre;-webkit-text-stroke:0.12px #12272e;text-rendering:geometricPrecision;">HTTP/1.1 404 Not Found  (text/html)</div>
<div style="position:absolute;left:25.294189453125px;top:525.58px;font:400 11.9px/11.9px 'Liberation Mono', monospace;color:#12272e;white-space:pre;-webkit-text-stroke:0.12px #12272e;text-rendering:geometricPrecision;">62873</div>
<div style="position:absolute;left:67.0px;top:525.58px;font:400 11.9px/11.9px 'Liberation Mono', monospace;color:#12272e;white-space:pre;-webkit-text-stroke:0.12px #12272e;text-rendering:geometricPrecision;">15:19:30.650091</div>
<div style="position:absolute;left:222.5px;top:525.58px;font:400 11.9px/11.9px 'Liberation Mono', monospace;color:#12272e;white-space:pre;-webkit-text-stroke:0.12px #12272e;text-rendering:geometricPrecision;">10.88.194.200</div>
<div style="position:absolute;left:381.5px;top:525.58px;font:400 11.9px/11.9px 'Liberation Mono', monospace;color:#12272e;white-space:pre;-webkit-text-stroke:0.12px #12272e;text-rendering:geometricPrecision;">10.7.148.4</div>
<div style="position:absolute;left:531.5px;top:525.58px;font:400 11.9px/11.9px 'Liberation Mono', monospace;color:#12272e;white-space:pre;-webkit-text-stroke:0.12px #12272e;text-rendering:geometricPrecision;">HTTP</div>
<div style="position:absolute;left:605.076513671875px;top:525.58px;font:400 11.9px/11.9px 'Liberation Mono', monospace;color:#12272e;white-space:pre;-webkit-text-stroke:0.12px #12272e;text-rendering:geometricPrecision;">179</div>
<div style="position:absolute;left:829.447216796875px;top:525.58px;font:400 11.9px/11.9px 'Liberation Mono', monospace;color:#12272e;white-space:pre;-webkit-text-stroke:0.12px #12272e;text-rendering:geometricPrecision;">0.010264000</div>
<div style="position:absolute;left:913.5px;top:525.58px;font:400 11.9px/11.9px 'Liberation Mono', monospace;color:#12272e;white-space:pre;-webkit-text-stroke:0.12px #12272e;text-rendering:geometricPrecision;">GET /icons/phpinfo.php HTTP/1.1</div>
<svg style="position:absolute;left:0px;top:322px" width="20" height="40"><g stroke="#7f7f7f" stroke-width="1" fill="none"><path d="M7.5 2 V38"/><path d="M1 11.5 H12"/><path d="M1 29.5 H15"/></g><path d="M11 8 L16 11.5 L11 15 Z" fill="#7f7f7f"/></svg>
<div style="position:absolute;left:0px;top:543px;width:1387px;height:17px;background:#f0f0f0;"></div>
<div style="position:absolute;left:0px;top:543px;width:1387px;height:1px;background:#ffffff;"></div>
<div style="position:absolute;left:16px;top:551px;width:1036px;height:2px;background:#8a8a8a;"></div>
<div style="position:absolute;left:0px;top:560px;width:1387px;height:1px;background:#8a919b;"></div>
<div style="position:absolute;left:0px;top:561px;width:1387px;height:5px;background:#f0f0f0;"></div>
<div style="position:absolute;left:0px;top:566px;width:1387px;height:1px;background:#8a919b;"></div>
<div style="position:absolute;left:0px;top:567px;width:1058px;height:102px;background:#ffffff;"></div>
<div style="position:absolute;left:1057px;top:566px;width:6px;height:103px;background:#f0f0f0;"></div>
<div style="position:absolute;left:1057px;top:566px;width:1px;height:103px;background:#8a919b;"></div>
<div style="position:absolute;left:19px;top:567px;width:1021px;height:18px;background:#f0f0f0;"></div>
<div style="position:absolute;left:22.0px;top:571.88px;font:400 11.9px/11.9px 'Liberation Mono', monospace;color:#000;white-space:pre;-webkit-text-stroke:0.12px #000;text-rendering:geometricPrecision;">Frame 62840: 1468 bytes on wire (11744 bits), 1468 bytes captured (11744 bits)</div>
<svg style="position:absolute;left:5px;top:572px" width="8" height="9"><path d="M1.5 0.8 L5.5 4.5 L1.5 8.2" stroke="#555" stroke-width="1" fill="none"/></svg>
<div style="position:absolute;left:19px;top:585px;width:1021px;height:18px;background:#f0f0f0;"></div>
<div style="position:absolute;left:22.0px;top:589.88px;font:400 11.9px/11.9px 'Liberation Mono', monospace;color:#000;white-space:pre;-webkit-text-stroke:0.12px #000;text-rendering:geometricPrecision;">Ethernet II, Src: </div>
<svg style="position:absolute;left:5px;top:590px" width="8" height="9"><path d="M1.5 0.8 L5.5 4.5 L1.5 8.2" stroke="#555" stroke-width="1" fill="none"/></svg>
<div style="position:absolute;left:19px;top:603px;width:1021px;height:18px;background:#f0f0f0;"></div>
<div style="position:absolute;left:22.0px;top:607.88px;font:400 11.9px/11.9px 'Liberation Mono', monospace;color:#000;white-space:pre;-webkit-text-stroke:0.12px #000;text-rendering:geometricPrecision;">Internet Protocol Version 4, Src: 10.7.148.4, Dst: 10.88.194.200</div>
<svg style="position:absolute;left:5px;top:608px" width="8" height="9"><path d="M1.5 0.8 L5.5 4.5 L1.5 8.2" stroke="#555" stroke-width="1" fill="none"/></svg>
<div style="position:absolute;left:19px;top:621px;width:1021px;height:18px;background:#f0f0f0;"></div>
<div style="position:absolute;left:22.0px;top:625.88px;font:400 11.9px/11.9px 'Liberation Mono', monospace;color:#000;white-space:pre;-webkit-text-stroke:0.12px #000;text-rendering:geometricPrecision;">Transmission Control Protocol, Src Port: 81, Dst Port: 58614, Seq: 1, Ack: 1, Len: 1414</div>
<svg style="position:absolute;left:5px;top:626px" width="8" height="9"><path d="M1.5 0.8 L5.5 4.5 L1.5 8.2" stroke="#555" stroke-width="1" fill="none"/></svg>
<div style="position:absolute;left:22.0px;top:643.88px;font:400 11.9px/11.9px 'Liberation Mono', monospace;color:#000;white-space:pre;-webkit-text-stroke:0.12px #000;text-rendering:geometricPrecision;">[5 Reassembled TCP Segments (14554 bytes): #62832(1414), #62834(1414)]</div>
<svg style="position:absolute;left:5px;top:644px" width="8" height="9"><path d="M1.5 0.8 L5.5 4.5 L1.5 8.2" stroke="#555" stroke-width="1" fill="none"/></svg>
<div style="position:absolute;left:19px;top:657px;width:1021px;height:18px;background:#f0f0f0;"></div>
<div style="position:absolute;left:22.0px;top:661.88px;font:400 11.9px/11.9px 'Liberation Mono', monospace;color:#000;white-space:pre;-webkit-text-stroke:0.12px #000;text-rendering:geometricPrecision;">Hypertext Transfer Protocol, has 3 chunks (including last chunk)</div>
<svg style="position:absolute;left:3px;top:664px" width="11" height="7"><path d="M1 1 L5.5 5.5 L10 1" stroke="#555" stroke-width="1" fill="none"/></svg>
<div style="position:absolute;left:147px;top:589px;width:221px;height:10px;background:#e31b23;border-radius:5px"></div>
<div style="position:absolute;left:649.0px;top:589.88px;font:400 11.9px/11.9px 'Liberation Mono', monospace;color:#000;white-space:pre;-webkit-text-stroke:0.12px #000;text-rendering:geometricPrecision;">4:45:56)</div>
<div style="position:absolute;left:1040px;top:567px;width:17px;height:102px;background:#f0f0f0;"></div>
<div style="position:absolute;left:1040px;top:567px;width:1px;height:102px;background:#ffffff;"></div>
<div style="position:absolute;left:1048px;top:584px;width:2px;height:85px;background:#8a8a8a;"></div>
<div style="position:absolute;left:1063px;top:566px;width:324px;height:1px;background:#8a919b;"></div>
<div style="position:absolute;left:1063px;top:566px;width:1px;height:103px;background:#8a919b;"></div>
<div style="position:absolute;left:1064px;top:567px;width:323px;height:102px;background:#ffffff;"></div>
<div style="position:absolute;left:1064px;top:567px;width:43px;height:102px;background:#f0f0f0;"></div>
<div style="position:absolute;left:1070.3px;top:570.58px;font:400 11.9px/11.9px 'Liberation Mono', monospace;color:#a5a5a5;white-space:pre;-webkit-text-stroke:0.12px #a5a5a5;text-rendering:geometricPrecision;">0000</div>
<div style="position:absolute;left:1113.0px;top:570.58px;font:400 11.9px/11.9px 'Liberation Mono', monospace;color:#000;white-space:pre;-webkit-text-stroke:0.12px #000;text-rendering:geometricPrecision;">00 12 23 34 45 56 60 54  43 32 21 10 08 00</div>
<div style="position:absolute;left:1070.3px;top:585.58px;font:400 11.9px/11.9px 'Liberation Mono', monospace;color:#a5a5a5;white-space:pre;-webkit-text-stroke:0.12px #a5a5a5;text-rendering:geometricPrecision;">0010</div>
<div style="position:absolute;left:1113.0px;top:585.58px;font:400 11.9px/11.9px 'Liberation Mono', monospace;color:#000;white-space:pre;-webkit-text-stroke:0.12px #000;text-rendering:geometricPrecision;">05 ae c2 0f 40 00 38 06  10 0f 0a 07 94 c4</div>
<div style="position:absolute;left:1070.3px;top:600.58px;font:400 11.9px/11.9px 'Liberation Mono', monospace;color:#a5a5a5;white-space:pre;-webkit-text-stroke:0.12px #a5a5a5;text-rendering:geometricPrecision;">0020</div>
<div style="position:absolute;left:1113.0px;top:600.58px;font:400 11.9px/11.9px 'Liberation Mono', monospace;color:#000;white-space:pre;-webkit-text-stroke:0.12px #000;text-rendering:geometricPrecision;">c2 c8 00 51 ed 7a 29 9c  c6 bf 98 6e 05 50</div>
<div style="position:absolute;left:1070.3px;top:615.58px;font:400 11.9px/11.9px 'Liberation Mono', monospace;color:#a5a5a5;white-space:pre;-webkit-text-stroke:0.12px #a5a5a5;text-rendering:geometricPrecision;">0030</div>
<div style="position:absolute;left:1113.0px;top:615.58px;font:400 11.9px/11.9px 'Liberation Mono', monospace;color:#000;white-space:pre;-webkit-text-stroke:0.12px #000;text-rendering:geometricPrecision;">00 e5 23 07 00 00 30 37  2d 30 38 2d 31 32</div>
<div style="position:absolute;left:1070.3px;top:630.58px;font:400 11.9px/11.9px 'Liberation Mono', monospace;color:#a5a5a5;white-space:pre;-webkit-text-stroke:0.12px #a5a5a5;text-rendering:geometricPrecision;">0040</div>
<div style="position:absolute;left:1113.0px;top:630.58px;font:400 11.9px/11.9px 'Liberation Mono', monospace;color:#000;white-space:pre;-webkit-text-stroke:0.12px #000;text-rendering:geometricPrecision;">38 3a 35 33 20 20 3c 2f  74 64 3e 3c 74 64</div>
<div style="position:absolute;left:1070.3px;top:645.58px;font:400 11.9px/11.9px 'Liberation Mono', monospace;color:#a5a5a5;white-space:pre;-webkit-text-stroke:0.12px #a5a5a5;text-rendering:geometricPrecision;">0050</div>
<div style="position:absolute;left:1113.0px;top:645.58px;font:400 11.9px/11.9px 'Liberation Mono', monospace;color:#000;white-space:pre;-webkit-text-stroke:0.12px #000;text-rendering:geometricPrecision;">6c 69 67 6e 3d 22 72 69  67 68 74 22 3e 31</div>
<div style="position:absolute;left:1070.3px;top:660.58px;font:400 11.9px/11.9px 'Liberation Mono', monospace;color:#a5a5a5;white-space:pre;-webkit-text-stroke:0.12px #a5a5a5;text-rendering:geometricPrecision;">0060</div>
<div style="position:absolute;left:1113.0px;top:660.58px;font:400 11.9px/11.9px 'Liberation Mono', monospace;color:#000;white-space:pre;-webkit-text-stroke:0.12px #000;text-rendering:geometricPrecision;">20 3c 2f 74 64 3e 3c 74  64 3e 26 6e 62 73</div>
<div style="position:absolute;left:371px;top:351px;width:281px;height:330px;background:rgba(0,0,0,0.22);filter:blur(1.2px)"></div>
<div style="position:absolute;left:368px;top:348px;width:281px;height:330px;background:#f0f0f0;border:2px solid #fbfbfb;box-sizing:border-box"></div>
<div style="position:absolute;left:394px;top:350px;width:2px;height:330px;background:#fcfcfc;"></div>
<div style="position:absolute;left:400.1px;top:356.64px;font:400 12px/12px 'Liberation Sans', sans-serif;color:#000;white-space:pre;transform:scaleX(0.9939);transform-origin:0 0;">Mark/Unmark Selected</div>
<div style="position:absolute;left:564.4px;top:356.64px;font:400 12px/12px 'Liberation Sans', sans-serif;color:#000;white-space:pre;transform:scaleX(1.0793);transform-origin:0 0;">Ctrl+M</div>
<div style="position:absolute;left:400.1px;top:378.64px;font:400 12px/12px 'Liberation Sans', sans-serif;color:#000;white-space:pre;transform:scaleX(1.0045);transform-origin:0 0;">Ignore/Unignore Selected</div>
<div style="position:absolute;left:564.4px;top:378.64px;font:400 12px/12px 'Liberation Sans', sans-serif;color:#000;white-space:pre;transform:scaleX(1.0482);transform-origin:0 0;">Ctrl+D</div>
<div style="position:absolute;left:400.1px;top:400.64px;font:400 12px/12px 'Liberation Sans', sans-serif;color:#000;white-space:pre;transform:scaleX(0.9713);transform-origin:0 0;">Set/Unset Time Reference</div>
<div style="position:absolute;left:564.4px;top:400.64px;font:400 12px/12px 'Liberation Sans', sans-serif;color:#000;white-space:pre;transform:scaleX(1.0303);transform-origin:0 0;">Ctrl+T</div>
<div style="position:absolute;left:400.1px;top:422.64px;font:400 12px/12px 'Liberation Sans', sans-serif;color:#000;white-space:pre;transform:scaleX(0.9752);transform-origin:0 0;">Time Shift...</div>
<div style="position:absolute;left:564.4px;top:422.64px;font:400 12px/12px 'Liberation Sans', sans-serif;color:#000;white-space:pre;transform:scaleX(1.0339);transform-origin:0 0;">Ctrl+Shift+T</div>
<div style="position:absolute;left:400.1px;top:444.64px;font:400 12px/12px 'Liberation Sans', sans-serif;color:#000;white-space:pre;transform:scaleX(0.9669);transform-origin:0 0;">Packet Comments</div>
<svg style="position:absolute;left:630px;top:446px" width="5" height="8"><path d="M0 0 L4.5 3.75 L0 7.5 Z" fill="#000"/></svg>
<div style="position:absolute;left:396px;top:465px;width:243px;height:1px;background:#d7d7d7;"></div>
<div style="position:absolute;left:400.1px;top:475.64px;font:400 12px/12px 'Liberation Sans', sans-serif;color:#000;white-space:pre;transform:scaleX(0.9663);transform-origin:0 0;">Edit Resolved Name</div>
<div style="position:absolute;left:396px;top:496px;width:243px;height:1px;background:#d7d7d7;"></div>
<div style="position:absolute;left:400.1px;top:506.64px;font:400 12px/12px 'Liberation Sans', sans-serif;color:#000;white-space:pre;transform:scaleX(0.9838);transform-origin:0 0;">Apply as Filter</div>
<svg style="position:absolute;left:630px;top:508px" width="5" height="8"><path d="M0 0 L4.5 3.75 L0 7.5 Z" fill="#000"/></svg>
<div style="position:absolute;left:400.1px;top:528.64px;font:400 12px/12px 'Liberation Sans', sans-serif;color:#000;white-space:pre;transform:scaleX(0.9605);transform-origin:0 0;">Prepare as Filter</div>
<svg style="position:absolute;left:630px;top:530px" width="5" height="8"><path d="M0 0 L4.5 3.75 L0 7.5 Z" fill="#000"/></svg>
<div style="position:absolute;left:400.1px;top:550.64px;font:400 12px/12px 'Liberation Sans', sans-serif;color:#000;white-space:pre;transform:scaleX(0.9849);transform-origin:0 0;">Conversation Filter</div>
<svg style="position:absolute;left:630px;top:552px" width="5" height="8"><path d="M0 0 L4.5 3.75 L0 7.5 Z" fill="#000"/></svg>
<div style="position:absolute;left:400.1px;top:572.64px;font:400 12px/12px 'Liberation Sans', sans-serif;color:#000;white-space:pre;transform:scaleX(0.9834);transform-origin:0 0;">Colorize Conversation</div>
<svg style="position:absolute;left:630px;top:574px" width="5" height="8"><path d="M0 0 L4.5 3.75 L0 7.5 Z" fill="#000"/></svg>
<div style="position:absolute;left:400.1px;top:594.64px;font:400 12px/12px 'Liberation Sans', sans-serif;color:#000;white-space:pre;transform:scaleX(0.8496);transform-origin:0 0;">SCTP</div>
<svg style="position:absolute;left:630px;top:596px" width="5" height="8"><path d="M0 0 L4.5 3.75 L0 7.5 Z" fill="#000"/></svg>
<div style="position:absolute;left:371px;top:611px;width:275px;height:22px;background:#91c9f7;"></div>
<div style="position:absolute;left:400.1px;top:616.64px;font:400 12px/12px 'Liberation Sans', sans-serif;color:#000;white-space:pre;transform:scaleX(1.0004);transform-origin:0 0;">Follow</div>
<svg style="position:absolute;left:630px;top:618px" width="5" height="8"><path d="M0 0 L4.5 3.75 L0 7.5 Z" fill="#000"/></svg>
<div style="position:absolute;left:396px;top:637px;width:243px;height:1px;background:#d7d7d7;"></div>
<div style="position:absolute;left:400.1px;top:647.64px;font:400 12px/12px 'Liberation Sans', sans-serif;color:#000;white-space:pre;transform:scaleX(0.9923);transform-origin:0 0;">Copy</div>
<svg style="position:absolute;left:630px;top:649px" width="5" height="8"><path d="M0 0 L4.5 3.75 L0 7.5 Z" fill="#000"/></svg>
<div style="position:absolute;left:396px;top:668px;width:243px;height:1px;background:#d7d7d7;"></div>
<div style="position:absolute;left:646px;top:612px;width:237px;height:48px;background:rgba(0,0,0,0.22);filter:blur(1.2px)"></div>
<div style="position:absolute;left:643px;top:609px;width:237px;height:48px;background:#f0f0f0;border:2px solid #fbfbfb;box-sizing:border-box"></div>
<div style="position:absolute;left:645px;top:611px;width:233px;height:22px;background:#91c9f7;"></div>
<div style="position:absolute;left:668px;top:611px;width:2px;height:44px;background:#fcfcfc;"></div>
<div style="position:absolute;left:668px;top:611px;width:2px;height:22px;background:#9dcff8;"></div>
<div style="position:absolute;left:674.2px;top:616.64px;font:400 12px/12px 'Liberation Sans', sans-serif;color:#000;white-space:pre;transform:scaleX(0.9285);transform-origin:0 0;">HTTP Stream</div>
<div style="position:absolute;left:770.5px;top:616.64px;font:400 12px/12px 'Liberation Sans', sans-serif;color:#000;white-space:pre;transform:scaleX(1.0489);transform-origin:0 0;">Ctrl+Alt+Shift+H</div>
<div style="position:absolute;left:674.2px;top:638.64px;font:400 12px/12px 'Liberation Sans', sans-serif;color:#000;white-space:pre;transform:scaleX(0.9073);transform-origin:0 0;">TCP Stream</div>
<div style="position:absolute;left:770.5px;top:638.64px;font:400 12px/12px 'Liberation Sans', sans-serif;color:#000;white-space:pre;transform:scaleX(1.0443);transform-origin:0 0;">Ctrl+Alt+Shift+T</div>
<div style="position:absolute;left:3px;top:338px;width:1145px;height:21px;border:2px solid #e8232b;box-sizing:border-box;border-radius:1.5px"></div>
<div style="position:absolute;left:367px;top:603px;width:273px;height:34px;border:2px solid #e8232b;box-sizing:border-box;border-radius:1.5px"></div>
<div style="position:absolute;left:645px;top:610px;width:235px;height:24px;border:2px solid #e8232b;box-sizing:border-box;border-radius:1.5px"></div>
</body></html>
